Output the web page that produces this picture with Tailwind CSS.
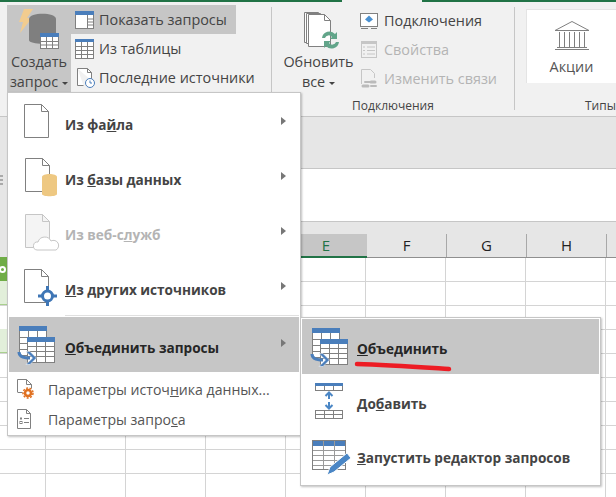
<!DOCTYPE html>
<html lang="ru">
<head>
  <meta charset="UTF-8" />
  <title>Создать запрос</title>
  <script src="https://cdn.jsdelivr.net/npm/@tailwindcss/browser@4"></script>
</head>

<body class="bg-white text-[#444] font-['Open_Sans','Noto_Sans',sans-serif] overflow-hidden">
<div class="relative w-[616px] h-[497px] overflow-hidden">

  <!-- верхняя зелёная полоса -->
  <div class="flex h-[2px]">
    <div class="w-[342px] bg-[#217346]"></div>
    <div class="w-[80px] bg-[#f1f1f1]"></div>
    <div class="flex-1 bg-[#217346]"></div>
  </div>

  <!-- лента -->
  <div class="flex h-[115px] bg-[#f1f1f1] border-b border-[#c6c6c6] text-[14.4px] leading-[20px]">
    <div class="w-[7px]"></div>

    <!-- Создать запрос -->
    <div class="w-[264px] flex pt-[3px] h-[91px]">
      <div class="w-[64px] bg-[#c6c6c6] flex flex-col items-center">
        <svg class="w-[64px] h-[46px] shrink-0" viewBox="7 5 64 46">
          <path d="M24 9h9l-6 9h5L20 33l3-11h-4z" fill="#f2cc8f"/>
          <path d="M29 19c0-7 27-7 27 0v21c0 5-27 5-27 0z" fill="#7f7f7f"/>
          <rect x="40.500" y="33.500" width="18" height="15" fill="#fff" stroke="#808080"/>
          <rect x="40" y="33" width="19" height="4" fill="#4a7ebb"/>
          <path d="M46.500 37v11M52.500 37v11M41 41.500h17M41 45h17" stroke="#808080" fill="none"/>
        </svg>
        <div class="mt-px h-[20px]">Создать</div>
        <div class="h-[20px] flex items-center gap-[4px]">запрос <span class="w-0 h-0 border-x-[3.500px] border-x-transparent border-t-[3.500px] border-t-[#444] mt-[2px]"></span></div>
      </div>
      <div class="w-[165px] flex flex-col">
        <div class="h-[29px] bg-[#c6c6c6] flex items-center">
          <svg class="w-[28px] h-[20px] shrink-0" viewBox="71 9 28 20">
            <rect x="75.500" y="10.500" width="18" height="17" fill="#fff" stroke="#808080"/>
            <rect x="75" y="10" width="19" height="4" fill="#4a7ebb"/>
            <path d="M87.500 14v13M88 18h5M88 21h5M88 24h5" stroke="#808080" fill="none"/>
          </svg>
          <span class="whitespace-nowrap">Показать запросы</span>
        </div>
        <div class="h-[29px] flex items-center">
          <svg class="w-[28px] h-[20px] shrink-0" viewBox="71 38 28 20">
            <rect x="75.500" y="38.500" width="18" height="19" fill="#fff" stroke="#808080"/>
            <rect x="75" y="38" width="19" height="3" fill="#4a7ebb"/>
            <path d="M81.500 41v16M87.500 41v16M76 45.500h17M76 49.500h17M76 53.500h17" stroke="#808080" fill="none"/>
          </svg>
          <span class="whitespace-nowrap">Из таблицы</span>
        </div>
        <div class="h-[29px] flex items-center">
          <svg class="w-[28px] h-[20px] shrink-0" viewBox="71 68 28 20">
            <path d="M77.500 68.500h10l4 4v8M77.500 68.500v17h6" fill="#fff" stroke="#808080"/>
            <path d="M87.500 68.500v4h4" fill="none" stroke="#808080"/>
            <circle cx="90" cy="83" r="4.500" fill="#fff" stroke="#4a7ebb"/>
            <path d="M90 80.500V83h2" fill="none" stroke="#4a7ebb"/>
          </svg>
          <span class="whitespace-nowrap">Последние источники</span>
        </div>
      </div>
      <div class="w-[35px]"></div>
    </div>

    <div class="w-px h-[85px] mt-[5px] bg-[#c6c6c6]"></div>

    <!-- Подключения -->
    <div class="w-[242px] flex flex-col">
      <div class="flex h-[93px] pl-[8px]">
        <div class="w-[77px] flex flex-col items-center">
          <svg class="w-[44px] h-[42px] mt-[8px] shrink-0" viewBox="296 10 44 42">
            <path d="M303.500 12.500h14v30h-14z" fill="#fff" stroke="#808080"/>
            <path d="M305.500 13.500h14v30h-14z" fill="#fff" stroke="#808080"/>
            <path d="M307.500 14.500h16l6 6v26h-22z" fill="#fff" stroke="#808080"/>
            <path d="M323.500 14.500v6h6" fill="none" stroke="#808080"/>
            <path d="M321 38a7.500 7.500 0 0 1 13-4l2-2v7h-7l2-2a4 4 0 0 0-7 1zM338 42a7.500 7.500 0 0 1-13 4l-2 2v-7h7l-2 2a4 4 0 0 0 7-1z" fill="#62a58a"/>
          </svg>
          <div class="h-[20px]">Обновить</div>
          <div class="h-[20px] flex items-center gap-[4px]">все <span class="w-0 h-0 border-x-[3.500px] border-x-transparent border-t-[3.500px] border-t-[#444] mt-[2px]"></span></div>
        </div>
        <div class="flex flex-col flex-1 pt-[4px]">
          <div class="h-[29px] flex items-center">
            <svg class="w-[27px] h-[20px] shrink-0" viewBox="358 9 27 20">
              <rect x="361.500" y="11.500" width="17" height="13" fill="#fff" stroke="#808080"/>
              <path d="M370 13.500l2 2 2 2-4 3-4-3z" fill="#4a90d0"/>
              <path d="M362 26.500h7M372 26.500h6" stroke="#808080" fill="none"/>
            </svg>
            <span class="whitespace-nowrap">Подключения</span>
          </div>
          <div class="h-[29px] flex items-center text-[#b4b4b4]">
            <svg class="w-[27px] h-[20px] shrink-0" viewBox="358 38 27 20">
              <rect x="362.500" y="39.500" width="15" height="16" fill="none" stroke="#c6c6c6"/>
              <rect x="362" y="39" width="16" height="3" fill="#c6c6c6"/>
              <path d="M368 45h8M368 48.500h8M368 52h8M364 45h2M364 48.500h2M364 52h2" stroke="#c6c6c6" fill="none"/>
            </svg>
            <span class="whitespace-nowrap">Свойства</span>
          </div>
          <div class="h-[29px] flex items-center text-[#b4b4b4]">
            <svg class="w-[27px] h-[20px] shrink-0" viewBox="358 68 27 20">
              <path d="M362.500 83v-14.500h9l4 4V77" fill="none" stroke="#c6c6c6"/>
              <path d="M364 85h5M372 81h4" stroke="#bbb" stroke-width="3" stroke-linecap="round" fill="none"/>
              <path d="M366 81h5M372 85h5" stroke="#bbb" stroke-width="2" stroke-linecap="round" fill="none"/>
            </svg>
            <span class="whitespace-nowrap">Изменить связи</span>
          </div>
        </div>
      </div>
      <div class="text-center text-[12px] leading-[20px] mt-px">Подключения</div>
    </div>

    <div class="w-px h-[103px] mt-[5px] bg-[#c6c6c6]"></div>

    <!-- Типы данных -->
    <div class="flex-1 flex flex-col pl-[11px]">
      <div class="h-[74px] mt-[7px] bg-white flex flex-col items-center w-[90px] border-l border-t border-[#e4e4e4]">
        <svg class="w-[36px] h-[32px] mt-[10px] shrink-0" viewBox="551 19 36 32">
          <path d="M552 29.500L569 20.500l17 9z" fill="none" stroke="#7f7f7f"/>
          <path d="M556.500 31v15M561.500 31v15M566.500 31v15M571.500 31v15M576.500 31v15M581.500 31v15" stroke="#7f7f7f" fill="none"/>
          <path d="M552 48.500h34M554 46.500h30" stroke="#7f7f7f" fill="none"/>
        </svg>
        <div class="mt-[5px] text-[#555]">Акции</div>
      </div>
      <div class="text-[12px] leading-[20px] mt-[13px] pl-[59px]">Типы</div>
    </div>
  </div>

  <!-- строка формул -->
  <div class="h-[105px] flex flex-col">
    <div class="h-[52px] bg-[#e6e6e6] border-b border-[#c6c6c6]"></div>
    <div class="h-[53px] bg-white border-b border-[#c6c6c6]"></div>
  </div>

  <!-- заголовки столбцов -->
  <div class="flex items-end h-[36px] bg-[#e6e6e6] border-b border-[#8f8f8f] text-[15px]">
    <div class="w-[301px]"></div>
    <div class="w-[66px] h-[24px] bg-[#c6c6c6] border-b-2 border-[#217346] -mb-px flex items-center justify-center text-[#217346] pr-[16px]">E</div>
    <div class="w-[80px] h-[23px] border-r border-[#a8a8a8] flex items-center justify-center text-[#222]">F</div>
    <div class="w-[80px] h-[23px] border-r border-[#a8a8a8] flex items-center justify-center text-[#222]">G</div>
    <div class="w-[80px] h-[23px] border-r border-[#a8a8a8] flex items-center justify-center text-[#222]">H</div>
  </div>

  <!-- ячейки -->
  <div id="cells" class="flex flex-col"></div>

  <!-- заголовки строк и зелёные ячейки слева -->
  <div class="absolute left-0 top-[117px] w-[7px] h-[140px] bg-[#e6e6e6] flex flex-col gap-[2px] pt-[58px]">
    <div class="w-[3px] h-[2px] bg-[#aaa]"></div>
    <div class="w-[3px] h-[2px] bg-[#aaa]"></div>
    <div class="w-[3px] h-[2px] bg-[#aaa]"></div>
  </div>
  <div class="absolute left-0 top-[257px] w-[7px] h-[24px] bg-[#70ad47] flex items-center">
    <div class="w-[7px] h-[7px] -ml-px rounded-full border-2 border-white"></div>
  </div>
  <div class="absolute left-0 top-[281px] w-[7px] h-[24px] bg-[#e2efda] border-b border-[#a9d08e]"></div>
  <div class="absolute left-0 top-[329px] w-[7px] h-[24px] bg-[#e2efda] border-b border-[#a9d08e]"></div>

  <!-- выпадающее меню -->
  <div class="absolute left-[7px] top-[92px] w-[294px] h-[344px] bg-white border border-[#c6c6c6] shadow-[1px_1px_2px_rgba(0,0,0,0.25)] flex flex-col pt-[2px] px-px">
    <div class="h-[55px] flex items-center font-bold text-[13.6px] shrink-0">
      <svg class="w-[56px] h-[55px] shrink-0" viewBox="8 95 56 55">
        <path d="M23.500 104.500h17l7 7v26h-24z" fill="#fff" stroke="#808080"/>
        <path d="M40.500 104.500v7h7" fill="none" stroke="#808080"/>
      </svg>
      <span class="flex-1 pt-[6px]">Из фа<u>й</u>ла</span>
      <span class="w-0 h-0 border-y-[4px] border-y-transparent border-l-[5px] border-l-[#777] mr-[13px] -mt-[4px]"></span>
    </div>
    <div class="h-[55px] flex items-center font-bold text-[13.6px] shrink-0">
      <svg class="w-[56px] h-[55px] shrink-0" viewBox="8 150 56 55">
        <path d="M24.500 158.500h17l7 7v26h-24z" fill="#fff" stroke="#808080"/>
        <path d="M41.500 158.500v7h7" fill="none" stroke="#808080"/>
        <path d="M41 177c0-4 15-4 15 0v17c0 3-15 3-15 0z" fill="#eec882"/>
      </svg>
      <span class="flex-1 pt-[6px]">Из <u>б</u>азы данных</span>
      <span class="w-0 h-0 border-y-[4px] border-y-transparent border-l-[5px] border-l-[#777] mr-[13px] -mt-[4px]"></span>
    </div>
    <div class="h-[55px] flex items-center font-bold text-[13.6px] text-[#b4b4b4] shrink-0">
      <svg class="w-[56px] h-[55px] shrink-0" viewBox="8 205 56 55">
        <path d="M24.500 214.500h17l7 7v26h-24z" fill="#f4f4f4" stroke="#c6c6c6"/>
        <path d="M41.500 214.500v7h7" fill="none" stroke="#c6c6c6"/>
        <path d="M36 250a4 4 0 0 1 1-8 7 7 0 0 1 13-1 5 5 0 0 1 5 9z" fill="#fff" stroke="#c6c6c6"/>
      </svg>
      <span class="flex-1 pt-[6px]">Из веб-с<u>л</u>ужб</span>
      <span class="w-0 h-0 border-y-[4px] border-y-transparent border-l-[5px] border-l-[#777] mr-[13px] -mt-[4px]"></span>
    </div>
    <div class="h-[55px] flex items-center font-bold text-[13.6px] shrink-0">
      <svg class="w-[56px] h-[55px] shrink-0" viewBox="8 260 56 55">
        <path d="M23.500 269.500h17l7 7v26h-24z" fill="#fff" stroke="#808080"/>
        <path d="M40.500 269.500v7h7" fill="none" stroke="#808080"/>
        <circle cx="46.500" cy="296" r="5" fill="#fff" stroke="#3f76b5" stroke-width="3"/>
        <path d="M46.500 286v5M46.500 301v5M37 296h4.500M51.500 296h4.500" stroke="#3f76b5" stroke-width="3" fill="none"/>
      </svg>
      <span class="flex-1 pt-[6px]"><u>И</u>з других источников</span>
      <span class="w-0 h-0 border-y-[4px] border-y-transparent border-l-[5px] border-l-[#777] mr-[13px] -mt-[4px]"></span>
    </div>
    <div class="h-px bg-[#e0e0e0] ml-[56px] shrink-0"></div>
    <div class="h-[55px] mt-px flex items-center font-bold text-[13.6px] text-[#262626] bg-[#c6c6c6] shrink-0">
      <svg class="w-[56px] h-[55px] shrink-0" viewBox="8 317 56 55">
        <use href="#merge-icon" x="0" y="0"/>
      </svg>
      <span class="flex-1 pt-[7px]"><u>О</u>бъединить запросы</span>
      <span class="w-0 h-0 border-y-[4px] border-y-transparent border-l-[5px] border-l-[#777] mr-[13px] -mt-[4px]"></span>
    </div>
    <div class="h-[31px] mt-[2px] flex items-center text-[14.100px] text-[#555] shrink-0">
      <svg class="w-[39px] h-[31px] shrink-0" viewBox="8 374 39 31">
        <path d="M16.500 392v-12.500h9l5 5v4M16.500 392.500h5" fill="none" stroke="#808080"/>
        <path d="M25.500 379.500v5h5" fill="none" stroke="#808080"/>
        <circle cx="27" cy="393" r="3" fill="none" stroke="#e07020" stroke-width="2.500"/>
        <circle cx="27" cy="393" r="5" fill="none" stroke="#e07020" stroke-width="1.500" stroke-dasharray="2 1.500"/>
      </svg>
      <span class="whitespace-nowrap">Параметры источ<u>н</u>ика данных...</span>
    </div>
    <div class="h-[30px] flex items-center text-[14.100px] text-[#555] shrink-0">
      <svg class="w-[39px] h-[30px] shrink-0" viewBox="8 405 39 30">
        <path d="M16.500 409.500h9l4 4v15h-13z" fill="#fff" stroke="#808080"/>
        <path d="M25.500 409.500v4h4" fill="none" stroke="#808080"/>
        <path d="M23 418.500h5M23 422.500h5" stroke="#808080" fill="none"/>
        <rect x="19" y="417.500" width="2" height="2" fill="#808080"/>
        <rect x="19" y="421.500" width="2" height="2" fill="none" stroke="#808080"/>
      </svg>
      <span class="whitespace-nowrap">Параметры запро<u>с</u>а</span>
    </div>
  </div>

  <!-- подменю -->
  <div class="absolute left-[300px] top-[317px] w-[301px] h-[169px] bg-white border border-[#c6c6c6] shadow-[1px_1px_2px_rgba(0,0,0,0.25)] flex flex-col pt-px px-px font-bold text-[13.6px]">
    <div class="h-[55px] flex items-center bg-[#c6c6c6] text-[#262626] shrink-0">
      <svg class="w-[55px] h-[55px] shrink-0" viewBox="301 319 55 55">
        <use href="#merge-icon" x="293" y="2"/>
      </svg>
      <span class="pt-[6px]"><u>О</u>бъединить</span>
    </div>
    <div class="h-[55px] flex items-center shrink-0">
      <svg class="w-[55px] h-[55px] shrink-0" viewBox="301 374 55 55">
        <rect x="314.500" y="383.500" width="27" height="7" fill="#fff" stroke="#808080"/>
        <rect x="314" y="383" width="28" height="3" fill="#4a7ebb"/>
        <path d="M323.500 386v5M332.500 386v5" stroke="#808080" fill="none"/>
        <rect x="314.500" y="410.500" width="27" height="8" fill="#fff" stroke="#808080"/>
        <path d="M314 414.500h28M323.500 411v7M332.500 411v7" stroke="#808080" fill="none"/>
        <path d="M328 393v6M324.500 396l3.500-3.500 3.500 3.500M328 402v6M324.500 405l3.500 3.500 3.500-3.500" stroke="#4a86c5" stroke-width="2" fill="none"/>
      </svg>
      <span class="pt-[6px]">До<u>б</u>авить</span>
    </div>
    <div class="h-[55px] flex items-center shrink-0">
      <svg class="w-[55px] h-[55px] shrink-0" viewBox="301 429 55 55">
        <rect x="311.500" y="440.500" width="33" height="29" fill="#fff" stroke="#808080"/>
        <rect x="312" y="441" width="32" height="5" fill="#4a7ebb"/>
        <path d="M322.500 441v28M333.500 441v28M312 450.500h32M312 455.500h32M312 460.500h32M312 465.500h32" stroke="#9a9a9a" fill="none"/>
        <path d="M326 475l3-8 17-14 4 5-17 14z" fill="#4a86c5" stroke="#fff"/>
      </svg>
      <span class="pt-[4px] whitespace-nowrap"><u>З</u>апустить редактор запросов</span>
    </div>
  </div>

  <!-- красное подчёркивание -->
  <svg class="absolute left-[350px] top-[358px] w-[110px] h-[18px]" viewBox="350 358 110 18">
    <path d="M357 364c30 1 60 3 92 5" stroke="#ed1c24" stroke-width="4.500" stroke-linecap="round" fill="none"/>
  </svg>

  <!-- общий значок объединения -->
  <svg class="absolute w-0 h-0">
    <defs>
      <g id="merge-icon">
        <rect x="18.500" y="326.500" width="27" height="29" fill="#fff" stroke="#808080"/>
        <rect x="18" y="326" width="28" height="5" fill="#4a7ebb"/>
        <path d="M27.500 331v6M36.500 331v6M19 337.500h10M19 343.500h10M19 349.500h10M27.500 337v18" stroke="#808080" fill="none"/>
        <rect x="26.500" y="337.500" width="27" height="25" fill="#fff" stroke="#808080"/>
        <rect x="26" y="337" width="28" height="5" fill="#4a7ebb"/>
        <path d="M35.500 342v20M44.500 342v20M27 346.500h26M27 351.500h26M27 356.500h26" stroke="#808080" fill="none"/>
        <path d="M18 352c0 4 4 6 11 6" stroke="#4a7ebb" stroke-width="3" fill="none"/>
        <path d="M25 351.500l6.500 6.500-6.500 6.500h4l6.500-6.500-6.500-6.500z" fill="#4a7ebb" stroke="#fff" stroke-width="0.500"/>
      </g>
    </defs>
  </svg>
</div>

<script>
  // сетка листа: 10 строк, ширины столбцов как в Excel
  const cells = document.getElementById('cells');
  const widths = [46, 80, 80, 80, 80, 80, 80, 80];
  for (let r = 0; r < 10; r++) {
    const row = document.createElement('div');
    row.className = 'flex h-[24px] border-b border-[#d4d4d4] w-[616px]';
    widths.forEach(w => {
      const cell = document.createElement('div');
      cell.className = 'h-full border-r border-[#d4d4d4] shrink-0';
      cell.style.width = w + 'px';
      row.appendChild(cell);
    });
    cells.appendChild(row);
  }
</script>
</body>
</html>
